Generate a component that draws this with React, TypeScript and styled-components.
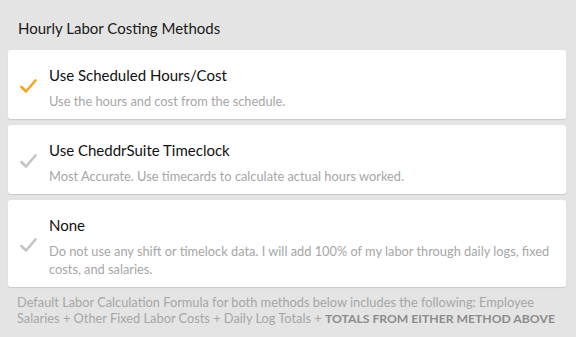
import styled, { createGlobalStyle } from 'styled-components'

const GlobalStyle = createGlobalStyle`
  body {
    margin: 0;
    background: #e4e4e4;
    font-family: Lato, "Liberation Sans", sans-serif;
  }
`

type Method = {
  title: string
  text: string
  active?: boolean
}

const methods: Method[] = [
  { title: 'Use Scheduled Hours/Cost', text: 'Use the hours and cost from the schedule.', active: true },
  { title: 'Use CheddrSuite Timeclock', text: 'Most Accurate. Use timecards to calculate actual hours worked.' },
  {
    title: 'None',
    text: 'Do not use any shift or timelock data. I will add 100% of my labor through daily logs, fixed costs, and salaries.',
  },
]

function Check({ active }: { active?: boolean }) {
  return (
    <CheckBox>
      <svg width="17" height="15" viewBox="0 0 17 15">
        <path
          d="M1.5 8 L6 12.5 L15.5 1.5"
          fill="none"
          stroke={active ? '#f5a623' : '#c4c4c4'}
          strokeWidth="2.6"
          strokeLinecap="round"
          strokeLinejoin="round"
        />
      </svg>
    </CheckBox>
  )
}

function App() {
  return (
    <>
      <GlobalStyle />
      <Wrapper>
        <Heading>Hourly Labor Costing Methods</Heading>
        <List>
          {methods.map((m) => (
            <Card key={m.title}>
              <Check active={m.active} />
              <Body>
                <Title>{m.title}</Title>
                <Text>{m.text}</Text>
              </Body>
            </Card>
          ))}
        </List>
        <Footer>
          Default Labor Calculation Formula for both methods below includes the following: Employee Salaries + Other
          Fixed Labor Costs + Daily Log Totals + <b>TOTALS FROM EITHER METHOD ABOVE</b>
        </Footer>
      </Wrapper>
    </>
  )
}

const Wrapper = styled.main`
  width: 576px;
  height: 337px;
  padding: 18px 10px 0 8px;
  box-sizing: border-box;
  overflow: hidden;
`
const Heading = styled.h2`
  margin: 0 0 11px 10px;
  font-size: 15px;
  font-weight: 400;
  line-height: 21px;
  color: #1a1a1a;
`
const List = styled.div`
  display: flex;
  flex-direction: column;
  gap: 6px;
`
const Card = styled.div`
  display: flex;
  align-items: center;
  background: #fff;
  border-radius: 3px;
  box-shadow: 0 1px 1px rgba(0, 0, 0, 0.12);
  padding: 15px 10px 9px 12px;
`
const CheckBox = styled.div`
  width: 29px;
  flex-shrink: 0;
  display: flex;
  margin-top: -2px;
`
const Body = styled.div`
  display: flex;
  flex-direction: column;
  gap: 7px;
`
const Title = styled.div`
  font-size: 15px;
  line-height: 20px;
  color: #111;
`
const Text = styled.div`
  font-size: 12.8px;
  line-height: 18px;
  color: #a6a6a6;
`
const Footer = styled.p`
  margin: 7px 0 0 9px;
  font-size: 12.8px;
  line-height: 16px;
  color: #a6a6a6;

  b {
    font-size: 12.2px;
    font-weight: 700;
    color: #8c8c8c;
  }
`
export default App
